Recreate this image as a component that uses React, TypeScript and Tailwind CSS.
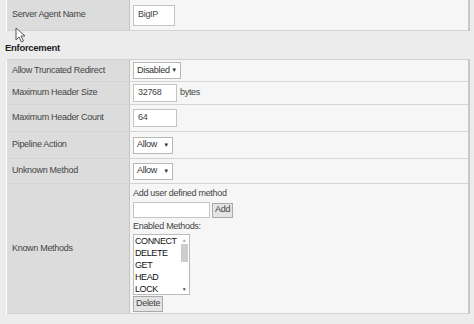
import React from "react";

const font = { fontFamily: '"Liberation Sans", Arial, sans-serif' };

const Row: React.FC<{ label: string; h: string; children: React.ReactNode }> = ({ label, h, children }) => (
  <div className={`flex ${h} border-b border-[#d4d4d4]`}>
    <div className="w-[123px] shrink-0 bg-[#dcdcdc] border-r border-[#c4c4c4] flex items-center pl-[5px] text-[9px] tracking-[-0.3px] text-[#444]">
      {label}
    </div>
    <div className="flex-1 bg-[#f6f6f6] flex items-center pl-[3px]">{children}</div>
  </div>
);

const Select: React.FC<{ value: string; w: string }> = ({ value, w }) => (
  <div className={`${w} h-[17px] bg-white border border-[#b8b8b8] flex items-center justify-between px-[3px] text-[9px] tracking-[-0.3px] text-[#333]`}>
    <span>{value}</span>
    <span className="text-[6px]">▼</span>
  </div>
);

const TextBox: React.FC<{ value?: string; w: string; h?: string }> = ({ value, w, h = "h-[18px]" }) => (
  <div className={`${w} ${h} bg-white border border-[#c4c4c4] flex items-center px-[4px] text-[9px] tracking-[-0.3px] text-[#444]`}>
    {value}
  </div>
);

export default function App() {
  const methods = ["CONNECT", "DELETE", "GET", "HEAD", "LOCK"];
  return (
    <div style={font} className="relative w-[474px] h-[324px] bg-[#ececec] overflow-hidden">
      <div className="ml-[6px] mr-[4px] border-l border-white border-r-2 border-r-[#c8c8c8]">
        <Row label="Server Agent Name" h="h-[31px]">
          <TextBox value="BigIP" w="w-[42px]" h="h-[21px]" />
        </Row>
      </div>
      <div className="h-[28px] flex items-end pb-[4px] pl-[5px] text-[9.5px] tracking-[-0.3px] font-bold text-[#222]">Enforcement</div>
      <div className="ml-[6px] mr-[4px] border-l border-white border-r-2 border-r-[#c8c8c8] border-t border-t-[#d0d0d0]">
        <Row label="Allow Truncated Redirect" h="h-[22px]">
          <Select value="Disabled" w="w-[48px]" />
        </Row>
        <Row label="Maximum Header Size" h="h-[23px]">
          <TextBox value="32768" w="w-[44px]" />
          <span className="ml-[3px] text-[9px] tracking-[-0.3px] text-[#444]">bytes</span>
        </Row>
        <Row label="Maximum Header Count" h="h-[27px]">
          <TextBox value="64" w="w-[44px]" />
        </Row>
        <Row label="Pipeline Action" h="h-[27px]">
          <Select value="Allow" w="w-[40px]" />
        </Row>
        <Row label="Unknown Method" h="h-[25px]">
          <Select value="Allow" w="w-[40px]" />
        </Row>
        <Row label="Known Methods" h="h-[130px]">
          <div className="flex flex-col text-[9px] tracking-[-0.3px] text-[#444] pt-[1px]">
            <div>Add user defined method</div>
            <div className="flex items-center gap-[2px] mt-[2px]">
              <TextBox w="w-[77px]" h="h-[16px]" />
              <div className="h-[15px] px-[2px] bg-[#e4e4e4] border border-[#aaa] flex items-center">Add</div>
            </div>
            <div className="mt-[2px]">Enabled Methods:</div>
            <div className="flex w-[57px] h-[61px] bg-white border border-[#bbb]">
              <div className="flex-1 flex flex-col pl-[1px] text-[9px] tracking-[-0.4px] leading-[12px] text-[#111]">
                {methods.map((m) => (
                  <div key={m}>{m}</div>
                ))}
              </div>
              <div className="w-[10px] flex flex-col items-center py-[1px]">
                <span className="text-[5px] leading-[8px] text-[#aaa]">▲</span>
                <div className="w-[7px] h-[18px] bg-[#cdcdcd]"></div>
                <div className="flex-1"></div>
                <span className="text-[5px] leading-[8px] text-[#555]">▼</span>
              </div>
            </div>
            <div className="mt-[1px] self-start h-[16px] px-[2px] bg-[#e4e4e4] border border-[#aaa] flex items-center">Delete</div>
          </div>
        </Row>
      </div>
      <svg className="absolute left-[15px] top-[27px]" width="12" height="16" viewBox="0 0 12 16">
        <path d="M1 1 L1 13 L4 10 L6.5 15 L8.5 14 L6 9 L10 9 Z" fill="#fff" stroke="#555" strokeWidth="1" strokeLinejoin="round" />
      </svg>
    </div>
  );
}
